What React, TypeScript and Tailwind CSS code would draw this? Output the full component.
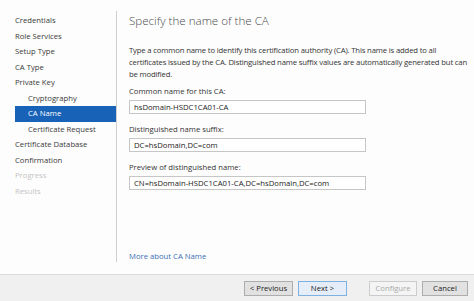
import React from "react";

const navItems: { label: string; level: number; state?: "active" | "disabled" }[] = [
  { label: "Credentials", level: 1 },
  { label: "Role Services", level: 1 },
  { label: "Setup Type", level: 1 },
  { label: "CA Type", level: 1 },
  { label: "Private Key", level: 1 },
  { label: "Cryptography", level: 2 },
  { label: "CA Name", level: 2, state: "active" },
  { label: "Certificate Request", level: 2 },
  { label: "Certificate Database", level: 1 },
  { label: "Confirmation", level: 1 },
  { label: "Progress", level: 1, state: "disabled" },
  { label: "Results", level: 1, state: "disabled" },
];

function Field({ label, value }: { label: string; value: string }) {
  return (
    <div className="flex flex-col">
      <div className="h-[12px] leading-[12px] text-[#333333]">{label}</div>
      <div className="mt-[3px] w-[237px] h-[14px] border border-[#c6c6c6] bg-white pl-[4px] leading-[12px] text-[#222222]">
        {value}
      </div>
    </div>
  );
}

export default function App() {
  return (
    <div
      className="w-[474px] h-[301px] bg-[#fdfdfd] flex flex-col overflow-hidden text-[7.7px]"
      style={{ fontFamily: '"Open Sans", "Noto Sans", sans-serif' }}
    >
      <div className="flex-1 flex min-h-0">
        <div className="w-[117px] pt-[13px] pb-[12px] flex">
          <div className="flex-1 pl-[15px] flex flex-col">
            {navItems.map((it) => (
              <div
                key={it.label}
                className={
                  "h-[15.5px] leading-[15.5px] whitespace-nowrap " +
                  (it.state === "active"
                    ? "bg-[#1862b8] text-white "
                    : it.state === "disabled"
                    ? "text-[#c4c4c4] "
                    : "text-[#3a3a3a] ")
                }
              >
                <span className={it.level === 2 ? "pl-[13px]" : "pl-0"}>{it.label}</span>
              </div>
            ))}
          </div>
          <div className="w-px mt-[-2px] mb-[0px] bg-[#cfcfcf]" />
        </div>
        <div className="flex-1 min-w-0 pl-[12px] flex flex-col">
          <div className="mt-[12px] h-[18px] leading-[18px] text-[11.6px] font-light text-[#4a4a4a] whitespace-nowrap">
            Specify the name of the CA
          </div>
          <div className="mt-[14px] leading-[12px] text-[#333333] tracking-[-0.15px] whitespace-nowrap flex flex-col">
            <span>Type a common name to identify this certification authority (CA). This name is added to all</span>
            <span>certificates issued by the CA. Distinguished name suffix values are automatically generated but can</span>
            <span>be modified.</span>
          </div>
          <div className="mt-[5px] flex flex-col gap-[9px]">
            <Field label="Common name for this CA:" value="hsDomain-HSDC1CA01-CA" />
            <Field label="Distinguished name suffix:" value="DC=hsDomain,DC=com" />
            <Field label="Preview of distinguished name:" value="CN=hsDomain-HSDC1CA01-CA,DC=hsDomain,DC=com" />
          </div>
          <div className="mt-auto mb-[12px] text-[#3b6fb6] leading-[12px]">More about CA Name</div>
        </div>
      </div>
      <div className="h-[27px] border-t border-[#dcdcdc] bg-[#f0f0f0] flex items-center justify-end pr-[6px]">
        <div className="flex items-center">
          <button className="w-[49px] h-[15px] border border-[#adadad] bg-[#e1e1e1] text-[#222222] leading-[13px]">
            &lt; Previous
          </button>
          <button className="ml-[5px] w-[49px] h-[15px] border border-[#7fb1e0] bg-[#e5eef8] text-[#222222] leading-[13px]">
            Next &gt;
          </button>
          <button className="ml-[22px] w-[48px] h-[15px] border border-[#cccccc] bg-[#f4f4f4] text-[#a8a8a8] leading-[13px]">
            Configure
          </button>
          <button className="ml-[5px] w-[46px] h-[15px] border border-[#adadad] bg-[#e1e1e1] text-[#222222] leading-[13px]">
            Cancel
          </button>
        </div>
      </div>
    </div>
  );
}
